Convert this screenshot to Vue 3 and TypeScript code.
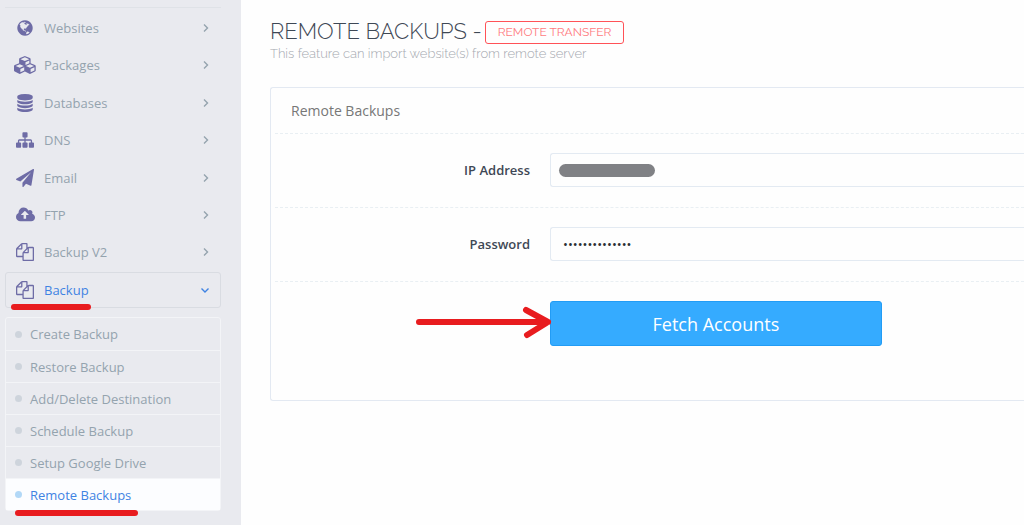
<script setup lang="ts">
import { ref } from 'vue'

interface Icon {
  box: string
  width: number
  path: string
}

const icons: Record<string, Icon> = {
  globe: {
    box: '0 0 1792 1792',
    width: 18,
    path: 'M896 128q209 0 385.5 103t279.5 279.5 103 385.5-103 385.5-279.5 279.5-385.5 103-385.5-103-279.5-279.5-103-385.5 103-385.5 279.5-279.5 385.5-103zm274 521q-2 1-9.5 9.5t-13.5 9.5q2 0 4.5-5t5-11 3.5-7q6-7 22-15 14-6 52-12 34-8 51 11-2-2 9.5-13t14.5-12q3-2 15-4.5t15-7.5l2-22q-12 1-17.5-7t-6.5-21q0 2-6 8 0-7-4.5-8t-11.5 1-9 1q-10-3-15-7.5t-8-16.5-4-15q-2-5-9.5-11t-9.5-10q-1-2-2.5-5.5t-3-6.5-4-5.5-5.5-2.5-7 5-7.5 10-4.5 5q-3-2-6-1.5t-4.5 1-4.5 3-5 3.5q-3 2-8.5 3t-8.5 2q15-5-1-11-10-4-16-3 9-4 7.5-12t-8.5-14h5q-1-4-8.5-8.5t-17.5-8.5-13-6q-8-5-34-9.5t-33-.5q-5 6-4.5 10.5t4 14 3.5 12.5q1 6-5.5 13t-6.5 12q0 7 14 15.5t10 21.5q-3 8-16 16t-16 12q-5 8-1.5 18.5t10.5 16.5q2 2 1.5 4t-3.5 4.5-5.5 4-6.5 3.5l-3 2q-11 5-20.5-6t-13.5-26q-7-25-16-30-23-8-29 1-5-13-41-26-25-9-58-4 6-1 0-15-7-15-19-12 3-6 4-17.5t1-13.5q3-13 12-23 1-1 7-8.5t9.5-13.5.5-6q35 4 50-11 5-5 11.5-17t10.5-17q9-6 14-5.5t14.5 5.5 14.5 5q14 1 15.5-11t-7.5-20q12 1 3-17-4-7-8-9-12-4-27 5-8 4 2 8-1-1-9.5 10.5t-16.5 17.5-16-5q-1-1-5.5-13.5t-9.5-13.5q-8 0-16 15 3-8-11-15t-24-8q19-12-8-27-7-4-20.5-5t-19.5 4q-5 7-5.5 11.5t5 8 10.5 5.5 11.5 4 8.5 3q14 10 8 14-2 1-8.5 3.5t-11.5 4.5-6 4q-3 4 0 14t-2 14q-5-5-9-17.5t-7-16.5q7 9-25 6l-10-1q-4 0-16 2t-20.5 1-13.5-8q-4-8 0-20 1-4 4-2-4-3-11-9.5t-10-8.5q-46 15-94 41 6 1 12-1 5-2 13-6.5t10-5.5q34-14 42-7l5-5q14 16 20 25-7-4-30-1-20 6-22 12 7 12 5 18-4-3-11.5-10t-14.5-11-15-5q-16 0-22 1-146 80-235 222 7 7 12 8 4 1 5 9t2.5 11 11.5-3q9 8 3 19 1-1 44 27 19 17 21 21 3 11-10 18-1-2-9-9t-9-4q-3 5 .5 18.5t10.5 12.5q-7 0-9.5 16t-2.5 35.5-1 23.5l2 1q-3 12 5.5 34.5t21.5 19.5q-13 3 20 43 6 8 8 9 3 2 12 7.5t15 10 10 10.5q4 5 10 22.5t14 23.5q-2 6 9.5 20t10.5 23q-1 0-2.5 1t-2.5 1q3 7 15.5 14t15.5 13q1 3 2 10t3 11 8 2q2-20-24-62-15-25-17-29-3-5-5.5-15.5t-4.5-14.5q2 0 6 1.5t8.5 3.5 7.5 4 2 3q-3 7 2 17.5t12 18.5 17 19 12 13q6 6 14 19.5t0 13.5q9 0 20 10.5t17 19.5q5 8 8 26t5 24q2 7 8.5 13.5t12.5 9.5l16 8 13 7q5 2 18.5 10.5t21.5 11.5q10 4 16 4t14.5-2.5 13.5-3.5q15-2 29 15t21 21q36 19 55 11-2 1 .5 7.5t8 15.5 9 14.5 5.5 8.5q5 6 18 15t18 15q6-4 7-9-3 8 7 20t18 10q14-3 14-32-31 15-49-18 0-1-2.5-5.5t-4-8.5-2.5-8.5 0-7.5 5-3q9 0 10-3.5t-2-12.5-4-13q-1-8-11-20t-12-15q-5 9-16 8t-16-9q0 1-1.5 5.5t-1.5 6.5q-13 0-15-1 1-3 2.5-17.5t3.5-22.5q1-4 5.5-12t7.5-14.5 4-12.5-4.5-9.5-17.5-2.5q-19 1-26 20-1 3-3 10.5t-5 11.5-9 7q-7 3-24 2t-24-5q-13-8-22.5-29t-9.5-37q0-10 2.5-26.5t3-25-5.5-24.5q3-2 9-9.5t10-10.5q2-1 4.5-1.5t4.5 0 4-1.5 3-6q-1-1-4-3-3-3-4-3 7 3 28.5-1.5t27.5 1.5q15 11 22-2 0-1-2.5-9.5t-.5-13.5q5 27 29 9 3 3 15.5 5t17.5 5q3 2 7 5.5t5.5 4.5 5-.5 8.5-6.5q10 14 12 24 11 40 19 44 7 3 11 2t4.5-9.5 0-14-1.5-12.5l-1-8v-18l-1-8q-15-3-18.5-12t1.5-18.5 15-18.5q1-1 8-3.5t15.5-6.5 12.5-8q21-19 15-35 7 0 11-9-1 0-5-3t-7.5-5-4.5-2q9-5 2-16 5-3 7.5-11t7.5-10q9 12 21 2 7-8 1-16 5-7 20.5-10.5t18.5-9.5q7 2 8-2t1-12 3-12q4-5 15-9t13-5l17-11q3-4 0-4 18 2 31-11 10-11-6-20 3-6-3-9.5t-15-5.5q3-1 11.5-.5t10.5-1.5q15-10-7-16-17-5-43 12zm-163 877q206-36 351-189-3-3-12.5-4.5t-12.5-3.5q-18-7-24-8 1-7-2.5-13t-8-9-12.5-8-11-7q-2-2-7-6t-7-5.5-7.5-4.5-8.5-2-10 1l-3 1q-3 1-5.5 2.5t-5.5 3-4 3 0 2.5q-21-17-36-22-5-1-11-5.5t-10.5-7-10-1.5-11.5 7q-5 5-6 15t-2 13q-7-5 0-17.5t2-18.5q-3-6-10.5-4.5t-12 4.5-11.5 8.5-9 6.5-8.5 5.5-8.5 7.5q-3 4-6 12t-5 11q-2-4-11.5-6.5t-9.5-5.5q2 10 4 35t5 38q7 31-12 48-27 25-29 40-4 22 12 26 0 7-8 20.5t-7 21.5q0 6 2 16z',
  },
  cubes: {
    box: '0 0 2304 1792',
    width: 23,
    path: 'M640 1632l384-192v-314l-384 164v342zm-64-454l404-173-404-173-404 173zm1088 454l384-192v-314l-384 164v342zm-64-454l404-173-404-173-404 173zm-448-293l384-165v-266l-384 164v267zm-64-379l441-189-441-189-441 189zm1088 518v416q0 36-19 67t-52 47l-448 224q-25 14-57 14t-57-14l-448-224q-4-2-7-4-2 2-7 4l-448 224q-25 14-57 14t-57-14l-448-224q-33-16-52-47t-19-67v-416q0-38 21.5-70t56.5-48l434-186v-400q0-38 21.5-70t56.5-48l448-192q23-10 50-10t50 10l448 192q35 16 56.5 48t21.5 70v400l434 186q36 16 57 48t21 70z',
  },
  database: {
    box: '0 0 1792 1792',
    width: 18,
    path: 'M896 768q237 0 443-43t325-127v170q0 69-103 128t-280 93.5-385 34.5-385-34.5-280-93.5-103-128v-170q119 84 325 127t443 43zm0 768q237 0 443-43t325-127v170q0 69-103 128t-280 93.5-385 34.5-385-34.5-280-93.5-103-128v-170q119 84 325 127t443 43zm0-384q237 0 443-43t325-127v170q0 69-103 128t-280 93.5-385 34.5-385-34.5-280-93.5-103-128v-170q119 84 325 127t443 43zm0-1152q208 0 385 34.5t280 93.5 103 128v128q0 69-103 128t-280 93.5-385 34.5-385-34.5-280-93.5-103-128v-128q0-69 103-128t280-93.5 385-34.5z',
  },
  sitemap: {
    box: '0 0 1792 1792',
    width: 18,
    path: 'M1792 1248v320q0 40-28 68t-68 28h-320q-40 0-68-28t-28-68v-320q0-40 28-68t68-28h96v-192h-512v192h96q40 0 68 28t28 68v320q0 40-28 68t-68 28h-320q-40 0-68-28t-28-68v-320q0-40 28-68t68-28h96v-192h-512v192h96q40 0 68 28t28 68v320q0 40-28 68t-68 28h-320q-40 0-68-28t-28-68v-320q0-40 28-68t68-28h96v-192q0-52 38-90t90-38h512v-192h-96q-40 0-68-28t-28-68v-320q0-40 28-68t68-28h320q40 0 68 28t28 68v320q0 40-28 68t-68 28h-96v192h512q52 0 90 38t38 90v192h96q40 0 68 28t28 68z',
  },
  plane: {
    box: '0 0 1792 1792',
    width: 18,
    path: 'M1764 11q33 24 27 64l-256 1536q-5 29-32 45-14 8-31 8-11 0-24-5l-453-185-242 295q-18 23-49 23-13 0-22-4-19-7-30.5-23.5t-11.5-36.5v-349l864-1059-1069 925-395-162q-37-14-40-55-2-40 32-59l1664-960q15-9 32-9 20 0 36 11z',
  },
  cloud: {
    box: '-64 0 1920 1792',
    width: 19,
    path: 'M1216 864q0-14-9-23l-352-352q-9-9-23-9t-23 9l-351 351q-10 12-10 24 0 14 9 23t23 9h224v352q0 13 9.5 22.5t22.5 9.5h192q13 0 22.5-9.5t9.5-22.5v-352h224q13 0 22.5-9.5t9.5-22.5zm640 288q0 159-112.5 271.5t-271.5 112.5h-1088q-185 0-316.5-131.5t-131.5-316.5q0-130 70-240t188-165q-2-30-2-43 0-212 150-362t362-150q156 0 285.5 87t188.5 231q71-62 166-62 106 0 181 75t75 181q0 76-41 138 130 31 213.5 135.5t83.5 238.5z',
  },
  files: {
    box: '0 0 1792 1792',
    width: 18,
    path: 'M1696 384q40 0 68 28t28 68v1216q0 40-28 68t-68 28h-960q-40 0-68-28t-28-68v-288h-544q-40 0-68-28t-28-68v-672q0-40 20-88t48-76l408-408q28-28 76-48t88-20h416q40 0 68 28t28 68v328q68-40 128-40h416zm-544 213l-299 299h299v-299zm-640-384l-299 299h299v-299zm196 647l316-316v-416h-384v416q0 40-28 68t-68 28h-416v640h512v-256q0-40 20-88t48-76zm956 804v-1152h-384v416q0 40-28 68t-68 28h-416v640h896z',
  },
}

const menu = [
  { label: 'Websites', icon: 'globe' },
  { label: 'Packages', icon: 'cubes' },
  { label: 'Databases', icon: 'database' },
  { label: 'DNS', icon: 'sitemap' },
  { label: 'Email', icon: 'plane' },
  { label: 'FTP', icon: 'cloud' },
  { label: 'Backup V2', icon: 'files' },
  { label: 'Backup', icon: 'files', open: true },
]

const submenu = [
  'Create Backup',
  'Restore Backup',
  'Add/Delete Destination',
  'Schedule Backup',
  'Setup Google Drive',
  'Remote Backups',
]
const current = 'Remote Backups'

const address = ref('')
const password = ref('abcdefghijklmn')
</script>

<template>
  <div class="page">
    <nav class="sidebar">
      <ul class="menu">
        <li v-for="item in menu" :key="item.label">
          <a href="#" class="item" :class="{ open: item.open }">
            <span class="icon">
              <svg :viewBox="icons[item.icon].box" :width="icons[item.icon].width" height="18" aria-hidden="true">
                <path :d="icons[item.icon].path" />
              </svg>
            </span>
            <span class="label">{{ item.label }}</span>
            <svg class="chevron" viewBox="0 0 10 10" width="10" height="10" aria-hidden="true">
              <path :d="item.open ? 'M1.5 3.5L5 7l3.5-3.5' : 'M4 1.5L7.5 5 4 8.5'" />
            </svg>
            <span v-if="item.open" class="mark mark-parent"></span>
          </a>
        </li>
      </ul>
      <ul class="submenu">
        <li v-for="name in submenu" :key="name">
          <a href="#" class="subitem" :class="{ current: name === current }">
            {{ name }}
            <span v-if="name === current" class="mark mark-child"></span>
          </a>
        </li>
      </ul>
    </nav>

    <main class="content">
      <header class="heading">
        <h1>REMOTE BACKUPS - <a href="#" class="transfer">REMOTE TRANSFER</a></h1>
        <p>This feature can import website(s) from remote server</p>
      </header>

      <section class="panel">
        <h2>Remote Backups</h2>
        <form @submit.prevent>
          <div class="row">
            <label for="address">IP Address</label>
            <div class="field">
              <input id="address" v-model="address" type="text" />
              <span class="redacted"></span>
            </div>
          </div>
          <div class="row">
            <label for="password">Password</label>
            <div class="field">
              <input id="password" v-model="password" type="password" />
            </div>
          </div>
          <div class="row">
            <div class="field action">
              <button type="submit">Fetch Accounts</button>
              <svg class="arrow" viewBox="0 0 138 34" width="138" height="34" aria-hidden="true">
                <path d="M4 17H133M111 5L133 17L112 30" />
              </svg>
            </div>
          </div>
        </form>
      </section>
    </main>
  </div>
</template>

<style>
body {
  margin: 0;
  background: #fefefe;
}
</style>

<style scoped>
.page {
  display: flex;
  min-height: 100vh;
  overflow: hidden;
  font-family: "Open Sans", sans-serif;
  font-size: 13px;
  color: #3e4855;
}

ul {
  list-style: none;
  margin: 0;
  padding: 0;
}

a {
  text-decoration: none;
}

.sidebar {
  box-sizing: border-box;
  flex: 0 0 241px;
  padding: 7px 20px 0 5px;
  background: #e9eaef;
}

.menu {
  display: grid;
  grid-auto-rows: 1fr;
  height: 299px;
  padding-top: 2px;
  border-top: 1px solid #dfe2e7;
}

.item {
  position: relative;
  display: flex;
  align-items: center;
  box-sizing: border-box;
  height: 36px;
  padding: 0 10px 0 7px;
  border: 1px solid transparent;
  border-radius: 3px;
  color: #94a3ae;
}

.item.open {
  border-color: #d9dce2;
  color: #3f83e3;
}

.icon {
  display: flex;
  justify-content: center;
  width: 24px;
  margin-right: 7px;
  fill: #6e6ca6;
}

.label {
  flex: 1;
}

.chevron {
  fill: none;
  stroke: currentColor;
  stroke-width: 1.4;
}

.submenu {
  display: grid;
  grid-auto-rows: 1fr;
  height: 192px;
  margin-top: 8px;
  border: 1px solid #f3f4f7;
  border-radius: 3px;
}

.submenu li + li {
  border-top: 1px solid #f3f4f7;
}

.subitem {
  position: relative;
  display: flex;
  align-items: center;
  gap: 8px;
  height: 100%;
  padding-left: 9px;
  color: #94a3ae;
}

.subitem::before {
  content: "";
  width: 7px;
  height: 7px;
  border-radius: 50%;
  background: #ced4dc;
}

.subitem.current {
  background: #fcfdff;
  color: #3f83e3;
}

.subitem.current::before {
  background: #b2d8f7;
}

.mark {
  position: absolute;
  height: 6px;
  border-radius: 3px;
  background: #e81c1f;
}

.mark-parent {
  left: 5px;
  bottom: -3px;
  width: 80px;
}

.mark-child {
  left: 9px;
  bottom: -6px;
  width: 123px;
}

.content {
  flex: 1;
  min-width: 0;
  padding: 18px 0 0 29px;
}

.heading {
  font-family: Raleway, Lato, sans-serif;
  font-weight: 300;
}

h1 {
  display: flex;
  align-items: center;
  gap: 3px;
  margin: 0;
  font-size: 22px;
  line-height: 27px;
  font-weight: 300;
}

.transfer {
  padding: 0 12px;
  margin-top: 2px;
  border: 1px solid #ff5257;
  border-radius: 3px;
  font-size: 12px;
  line-height: 21px;
  font-weight: 400;
  color: #ff7b7e;
}

.heading p {
  margin: 0;
  font-size: 13px;
  line-height: 18px;
  color: #a5a9b0;
}

.panel {
  margin-top: 24px;
  padding: 0 0 45px 4px;
  border: 1px solid #e3e9f2;
  border-right: 0;
  border-radius: 3px 0 0 3px;
}

h2 {
  margin: 0;
  padding: 0 16px;
  font-size: 14px;
  line-height: 45px;
  font-weight: 400;
  color: #777;
}

.row {
  display: grid;
  grid-template-columns: 255px 1fr;
  column-gap: 20px;
  align-items: center;
  padding: 19px 0 20px;
  border-top: 1px dashed #e9eff3;
}

.row:last-child {
  padding-bottom: 9px;
}

label {
  text-align: right;
  font-weight: 600;
}

.field {
  position: relative;
}

.action {
  grid-column: 2;
}

input {
  display: block;
  box-sizing: border-box;
  width: 100%;
  height: 34px;
  padding: 6px 12px;
  border: 1px solid #e3eaf2;
  border-right: 0;
  border-radius: 3px 0 0 3px;
  background: #fefefe;
  font: inherit;
  color: #2b2f33;
}

.redacted {
  position: absolute;
  left: 9px;
  top: 11px;
  width: 96px;
  height: 13px;
  border-radius: 7px;
  background: #808185;
}

button {
  display: block;
  width: 70%;
  height: 45px;
  border: 1px solid #229cf5;
  border-radius: 3px;
  background: #35abff;
  font: inherit;
  font-size: 18px;
  color: #fff;
}

.arrow {
  position: absolute;
  left: -135px;
  top: 4px;
  fill: none;
  stroke: #e81c1f;
  stroke-width: 6;
  stroke-linecap: round;
  stroke-linejoin: round;
}
</style>
